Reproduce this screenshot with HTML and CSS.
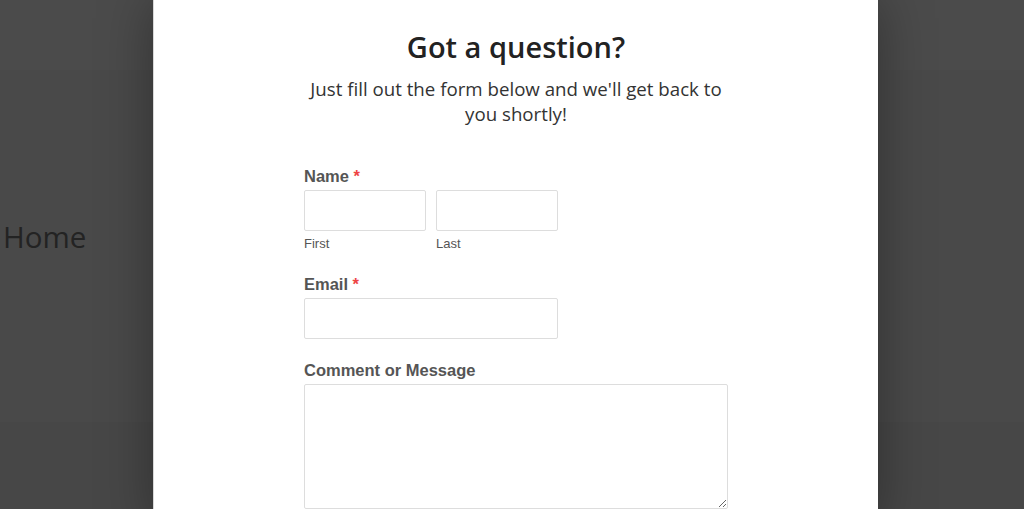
FILE: index.html
```html
<!DOCTYPE html>
<html lang="en">
<head>
<meta charset="utf-8">
<title>Got a question?</title>
<link rel="stylesheet" href="styles.css">
</head>
<body>
<div class="stage">
  <div class="backdrop-left">
    <span class="home">Home</span>
  </div>
  <main class="modal">
    <h1 class="title">Got a question?</h1>
    <p class="lead">Just fill out the form below and we'll get back to you shortly!</p>
    <form class="form">
      <div class="field field-name">
        <div class="label">Name <span class="req">*</span></div>
        <div class="name-row">
          <div class="name-col">
            <input class="input" type="text" aria-label="First">
            <div class="sublabel">First</div>
          </div>
          <div class="name-col">
            <input class="input" type="text" aria-label="Last">
            <div class="sublabel">Last</div>
          </div>
        </div>
      </div>
      <div class="field">
        <div class="label">Email <span class="req">*</span></div>
        <input class="input input-medium" type="email" aria-label="Email">
      </div>
      <div class="field">
        <div class="label">Comment or Message</div>
        <textarea class="textarea" aria-label="Comment or Message"></textarea>
      </div>
    </form>
  </main>
  <div class="backdrop-right"></div>
</div>
</body>
</html>
```
FILE: styles.css
```css
html, body {
  margin: 0;
  padding: 0;
  height: 100%;
  overflow: hidden;
}
body {
  background: linear-gradient(to bottom, #4b4b4b 0, #4b4b4b 70px, #494949 70px, #494949 422px, #474747 422px);
  font-family: "Liberation Sans", Arial, sans-serif;
}
.stage {
  display: grid;
  grid-template-columns: 153px 725px 1fr;
  height: 509px;
}
.backdrop-left {
  overflow: hidden;
  padding-top: 217px;
}
.home {
  display: block;
  font-family: "Open Sans", sans-serif;
  font-size: 29.5px;
  line-height: 40px;
  color: #232323;
  margin-left: 3px;
}
.modal {
  background: #fff;
  border-left: 1px solid #d8d8d8;
  box-shadow: 0 0 50px rgba(0, 0, 0, 0.35);
  display: flex;
  flex-direction: column;
  align-items: center;
  padding-top: 28px;
  position: relative;
  z-index: 1;
}
.title {
  margin: 0;
  font-family: "Open Sans", sans-serif;
  font-weight: 600;
  font-size: 29px;
  line-height: 38px;
  color: #222;
}
.lead {
  margin: 10px 0 0;
  width: 440px;
  text-align: center;
  font-family: "Open Sans", sans-serif;
  font-size: 18.7px;
  line-height: 25px;
  color: #333;
}
.form {
  width: 424px;
  margin-top: 40px;
}
.field {
  margin-bottom: 21px;
}
.field-name {
  margin-bottom: 22px;
}
.label {
  font-weight: 700;
  font-size: 16.5px;
  line-height: 20px;
  color: #555;
  margin-bottom: 4px;
}
.req {
  color: #e44;
}
.name-row {
  display: flex;
  gap: 10px;
  width: 254px;
}
.name-col {
  flex: 1;
}
.input {
  display: block;
  box-sizing: border-box;
  width: 100%;
  height: 41px;
  border: 1px solid #ddd;
  border-radius: 2px;
  background: #fff;
  margin: 0;
  padding: 6px 10px;
}
.input-medium {
  width: 254px;
}
.sublabel {
  font-size: 13px;
  line-height: 16px;
  color: #555;
  margin-top: 5px;
}
.textarea {
  display: block;
  box-sizing: border-box;
  width: 424px;
  height: 125px;
  border: 1px solid #ddd;
  border-radius: 2px;
  margin: 0;
  resize: vertical;
}
```
